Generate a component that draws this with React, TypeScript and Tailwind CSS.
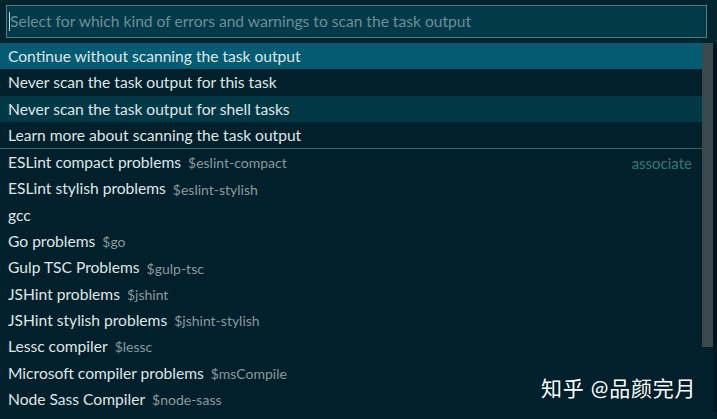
import React from 'react';

type Item = {
    label: string;
    detail?: string;
    bg?: string;
};

const topItems: Item[] = [
    { label: 'Continue without scanning the task output', bg: 'bg-[#045b72]' },
    { label: 'Never scan the task output for this task', bg: 'bg-[#01202b]' },
    { label: 'Never scan the task output for shell tasks', bg: 'bg-[#023846]' },
    { label: 'Learn more about scanning the task output', bg: 'bg-[#01202b]' },
];

const matchers: Item[] = [
    { label: 'ESLint compact problems', detail: '$eslint-compact' },
    { label: 'ESLint stylish problems', detail: '$eslint-stylish' },
    { label: 'gcc' },
    { label: 'Go problems', detail: '$go' },
    { label: 'Gulp TSC Problems', detail: '$gulp-tsc' },
    { label: 'JSHint problems', detail: '$jshint' },
    { label: 'JSHint stylish problems', detail: '$jshint-stylish' },
    { label: 'Lessc compiler', detail: '$lessc' },
    { label: 'Microsoft compiler problems', detail: '$msCompile' },
    { label: 'Node Sass Compiler', detail: '$node-sass' },
];

export default function App() {
    return (
        <div
            className="relative w-[717px] h-[419px] overflow-hidden bg-[#01202b] text-[#dfe6e7]"
            style={{ fontFamily: '"Segoe UI", Lato, "Noto Sans CJK SC", sans-serif' }}
        >
            {/* quick input box */}
            <div className="h-[43px] bg-[#02242f] pt-[5px] pl-[6px] pr-[10px]">
                <div className="flex items-center h-[33px] border border-[#4d7d84] bg-[#023a4a] pl-[2px]">
                    <span className="w-px h-[19px] bg-[#c9d6d8]" />
                    <span className="text-[15.6px] text-[#6f8e95] leading-none pt-px">
                        Select for which kind of errors and warnings to scan the task output
                    </span>
                </div>
            </div>

            <div className="flex">
                <div className="flex-1">
                    {topItems.map((item) => (
                        <div key={item.label} className={`flex items-center h-[26.3px] pl-[8px] pt-px text-[15.6px] ${item.bg}`}>
                            {item.label}
                        </div>
                    ))}
                    <div className="h-px bg-[#2f6a6c] mr-[-11px]" />
                    {matchers.map((item, i) => (
                        <div key={item.label} className="flex items-center h-[26.3px] pl-[8px] pr-[10px] pt-px text-[15.6px]">
                            <span>{item.label}</span>
                            {item.detail && (
                                <span className="ml-[7px] text-[14px] text-[#8b9a9d]">{item.detail}</span>
                            )}
                            {i === 0 && <span className="ml-auto text-[15px] text-[#2c7d77]">associate</span>}
                        </div>
                    ))}
                </div>
                <div className="w-[15px] flex">
                    <div className="w-[11px] h-[304px] bg-[#39494e]" />
                    <div className="w-[4px] bg-[#01171f]" />
                </div>
            </div>

            {/* watermark */}
            <div className="absolute left-[541px] top-[372px] text-[21px] text-white tracking-[0.8px]">
                知乎 @品颜完月
            </div>
        </div>
    );
}
